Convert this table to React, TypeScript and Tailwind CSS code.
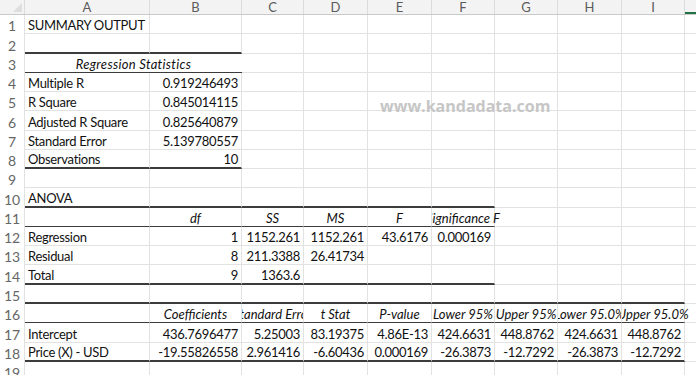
import React from "react";

type Align = "l" | "r" | "c";
type CellData = { t: string; a?: Align; i?: boolean; spill?: boolean };

const COLS = ["A", "B", "C", "D", "E", "F", "G", "H", "I"];
const WIDTHS = ["w-[125px]", "w-[92px]", "w-[62px]", "w-[64px]", "w-[64px]", "w-[63px]", "w-[63px]", "w-[64px]", "w-[63px]"];

const L = (t: string): CellData => ({ t, a: "l" });
const R = (t: string): CellData => ({ t, a: "r" });
const H = (t: string, spill = false): CellData => ({ t, a: "c", i: true, spill });

// row number -> cells A..I
const DATA: Record<number, CellData[]> = {
  1: [L("SUMMARY OUTPUT")],
  4: [L("Multiple R"), R("0.919246493")],
  5: [L("R Square"), R("0.845014115")],
  6: [L("Adjusted R Square"), R("0.825640879")],
  7: [L("Standard Error"), R("5.139780557")],
  8: [L("Observations"), R("10")],
  10: [L("ANOVA")],
  11: [L(""), H("df"), H("SS"), H("MS"), H("F"), H("Significance F", true)],
  12: [L("Regression"), R("1"), R("1152.261"), R("1152.261"), R("43.6176"), R("0.000169")],
  13: [L("Residual"), R("8"), R("211.3388"), R("26.41734")],
  14: [L("Total"), R("9"), R("1363.6")],
  16: [
    L(""),
    H("Coefficients"),
    H("Standard Error"),
    H("t Stat"),
    H("P-value"),
    H("Lower 95%"),
    H("Upper 95%"),
    H("Lower 95.0%"),
    H("Upper 95.0%", true),
  ],
  17: [
    L("Intercept"),
    R("436.7696477"),
    R("5.25003"),
    R("83.19375"),
    R("4.86E-13"),
    R("424.6631"),
    R("448.8762"),
    R("424.6631"),
    R("448.8762"),
  ],
  18: [
    L("Price (X) - USD"),
    R("-19.55826558"),
    R("2.961416"),
    R("-6.60436"),
    R("0.000169"),
    R("-26.3873"),
    R("-12.7292"),
    R("-26.3873"),
    R("-12.7292"),
  ],
};

// bottom edge of a cell: thick / thin dark line or plain gridline
function edge(row: number, col: number): "thick" | "thin" | null {
  if ((row === 2 || row === 8) && col <= 1) return "thick";
  if (row === 3 && col <= 1) return "thin";
  if ((row === 10 || row === 14) && col <= 5) return "thick";
  if (row === 11 && col <= 5) return "thin";
  if ((row === 15 || row === 18) && col <= 8) return "thick";
  if (row === 16 && col <= 8) return "thin";
  return null;
}

function Cell({ row, col }: { row: number; col: number }) {
  const d = DATA[row]?.[col];
  const e = edge(row, col);
  const border =
    e === "thick"
      ? "border-b-2 border-b-[#3c3c3c]"
      : e === "thin"
      ? "border-b border-b-[#3c3c3c]"
      : "border-b border-b-[#e2e2e2]";
  const align =
    d?.a === "r" ? "justify-end" : d?.a === "c" ? "justify-center" : "justify-start";
  const clip = d?.spill ? "[clip-path:inset(0_-200px_0_0)]" : "overflow-hidden";

  return (
    <div className={`${WIDTHS[col]} shrink-0 h-full border-r border-r-[#e2e2e2] ${border} ${clip} flex items-end ${align} px-[3px] pb-[1px]`}>
      {d && (
        <span className={`whitespace-nowrap leading-[14px] ${d.i ? "italic tracking-normal" : ""}`}>{d.t}</span>
      )}
    </div>
  );
}

// Regression Statistics spans A:B, centered across selection
function MergedRow3() {
  return (
    <div className="w-[217px] shrink-0 h-full border-b border-b-[#3c3c3c] flex items-end justify-center pb-[1px]">
      <span className="italic tracking-[0.3px] whitespace-nowrap leading-[14px]">Regression Statistics</span>
    </div>
  );
}

export default function App() {
  const rows = Array.from({ length: 19 }, (_, i) => i + 1);

  return (
    <div className="relative w-[696px] h-[375px] overflow-hidden bg-white text-[#111] text-[13px] tracking-[-0.3px] font-['Lato','Liberation_Sans',sans-serif]">
      {/* column headers */}
      <div className="flex h-[15px] bg-[#f3f3f3] border-b border-b-[#c9c9c9] text-[#5b5b5b] tracking-normal">
        <div className="w-[25px] shrink-0 relative border-r border-r-[#dcdcdc]">
          <div className="absolute right-[2px] bottom-[2px] w-0 h-0 border-l-[9px] border-l-transparent border-b-[9px] border-b-[#dedede]" />
        </div>
        {COLS.map((c, i) => (
          <div key={c} className={`${WIDTHS[i]} shrink-0 border-r border-r-[#dcdcdc] flex items-center justify-center leading-[14px] text-[13px]`}>
            {c}
          </div>
        ))}
        <div className="flex-1 border-b-2 border-b-[#217346]" />
      </div>

      {rows.map((r) => (
        <div key={r} className="flex h-[19.28px]">
          <div className="w-[25px] shrink-0 border-r border-r-[#e2e2e2] flex items-end justify-center pb-[1px] text-[14px] tracking-normal text-[#666] leading-[15px]">
            {r}
          </div>
          {r === 3 ? (
            <>
              <MergedRow3 />
              {COLS.slice(2).map((_, k) => (
                <Cell key={k} row={r} col={k + 2} />
              ))}
            </>
          ) : (
            COLS.map((_, k) => <Cell key={k} row={r} col={k} />)
          )}
          <div className="flex-1 border-b border-b-[#e2e2e2]" />
        </div>
      ))}

      {/* watermark */}
      <div className="absolute left-[380px] top-[94px] text-[16px] font-bold tracking-normal text-[#c6c6c6] font-['Open_Sans','Liberation_Sans',sans-serif]">
        www.kandadata.com
      </div>
    </div>
  );
}
